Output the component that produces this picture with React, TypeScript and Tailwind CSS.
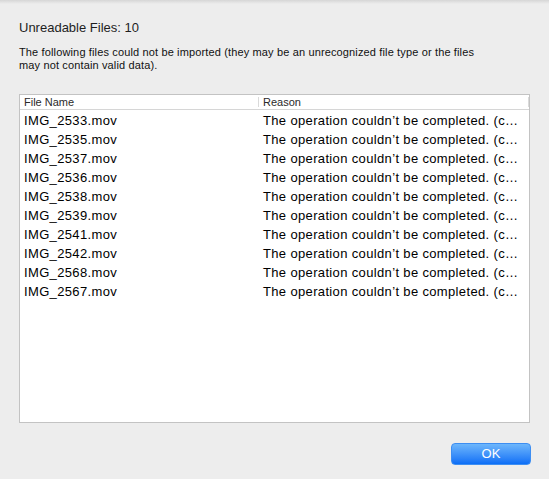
import React from "react";

const files = [
  "IMG_2533.mov",
  "IMG_2535.mov",
  "IMG_2537.mov",
  "IMG_2536.mov",
  "IMG_2538.mov",
  "IMG_2539.mov",
  "IMG_2541.mov",
  "IMG_2542.mov",
  "IMG_2568.mov",
  "IMG_2567.mov",
];

export default function App() {
  return (
    <div
      className="relative w-[549px] h-[479px] bg-[#ededed] flex flex-col px-[19px] overflow-hidden"
      style={{ fontFamily: '"Liberation Sans", Arial, sans-serif' }}
    >
      <div className="absolute left-0 right-0 top-0 h-[4px] bg-gradient-to-b from-[#d6d6d6] to-[#ededed]" />
      <div className="mt-[20px] h-[16px] leading-[16px] text-[13px] text-[#1e1e1e]">
        Unreadable Files: 10
      </div>
      <div className="mt-[10px] text-[11px] leading-[13px] tracking-[0.14px] text-[#111]">
        The following files could not be imported (they may be an unrecognized file type or the files
        <br />
        may not contain valid data).
      </div>
      <div className="mt-[22px] h-[329px] border border-[#c3c3c3] bg-white flex flex-col">
        <div className="h-[15px] flex items-center border-b border-[#d6d6d6] text-[11px] text-[#2a2a2a]">
          <div className="w-[238px] pl-[4px] leading-[14px]">File Name</div>
          <div className="w-px h-[10px] bg-[#dadada]" />
          <div className="flex-1 pl-[4px] leading-[14px]">Reason</div>
          <div className="w-px h-[10px] bg-[#dadada]" />
        </div>
        {files.map((f) => (
          <div key={f} className="h-[19px] flex items-center text-[13px] text-black leading-[19px] tracking-[0.35px] pt-[1px]">
            <div className="w-[239px] pl-[4px]">{f}</div>
            <div className="flex-1 pl-[4px] whitespace-nowrap overflow-hidden">
              The operation couldn’t be completed. (c…
            </div>
          </div>
        ))}
      </div>
      <div className="mt-[20px] flex justify-end">
        <button className="w-[80px] h-[22px] rounded-[4px] bg-gradient-to-b from-[#6db6fb] to-[#0a6ef6] border border-[#3d8ef2] text-white text-[13px] leading-[20px] mr-[-1px]">
          OK
        </button>
      </div>
    </div>
  );
}
